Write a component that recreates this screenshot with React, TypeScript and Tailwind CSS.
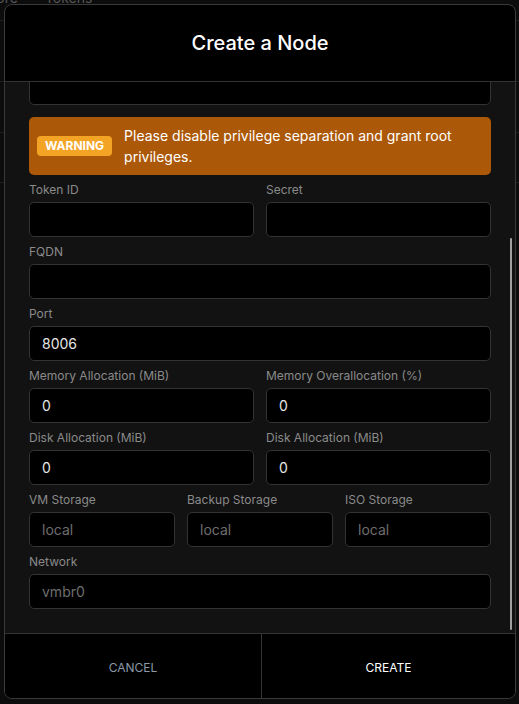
import React, { useLayoutEffect, useRef } from "react";

const font = { fontFamily: "Inter, 'Noto Sans', sans-serif" };

function Label({ children }: { children: React.ReactNode }) {
  return <div className="mb-1 text-xs leading-4 text-[#8a8a8a]">{children}</div>;
}

function Input({ value, placeholder }: { value?: string; placeholder?: string }) {
  return (
    <div className="flex h-[35px] items-center rounded-[5px] border border-[#333] bg-black px-3 text-sm">
      {value ? (
        <span className="text-[#e6e6e6]">{value}</span>
      ) : placeholder ? (
        <span className="text-[#6e6e6e]">{placeholder}</span>
      ) : null}
    </div>
  );
}

function Field({ label, value, placeholder }: { label: string; value?: string; placeholder?: string }) {
  return (
    <div className="min-w-0">
      <Label>{label}</Label>
      <Input value={value} placeholder={placeholder} />
    </div>
  );
}

export default function App() {
  const ref = useRef<HTMLDivElement>(null);
  useLayoutEffect(() => {
    if (ref.current) ref.current.scrollTop = 100000;
  }, []);

  return (
    <div className="relative h-[704px] w-full overflow-hidden bg-[#0c0c0c]" style={font}>
      {/* background page, dimmed */}
      <div className="absolute left-[-46px] top-[-12px] flex gap-[27px] text-sm text-[#555]">
        <span>Datastore</span>
        <span>Tokens</span>
      </div>
      <div className="absolute left-0 right-0 top-[20px] h-px bg-[#1f1f1f]" />
      <div className="absolute left-0 right-0 top-[81px] h-px bg-[#1f1f1f]" />
      <div className="absolute left-0 right-0 top-[132px] h-px bg-[#1f1f1f]" />
      <div className="absolute left-0 right-0 top-[182px] h-px bg-[#1f1f1f]" />

      {/* modal */}
      <div className="absolute left-[4px] top-[4px] flex h-[695px] w-[512px] flex-col overflow-hidden rounded-[8px] border border-[#3a3a3a] bg-black">
        <div className="flex h-[77px] shrink-0 items-center justify-center border-b border-[#333] pb-px text-[20px] font-medium text-white">
          Create a Node
        </div>

        <div className="relative min-h-0 flex-1 bg-[#121212]">
          <div
            ref={ref}
            className="h-full overflow-y-auto px-6 pb-6 pt-6 [scrollbar-width:none] [&::-webkit-scrollbar]:hidden"
          >
            <div className="flex flex-col gap-[7px]">
              <Field label="Name" />
              <Field label="Host" />
              <Field label="Username" />

              <div className="mt-[5px] flex items-center gap-3 rounded-[5px] bg-[#ab5808] py-2 pl-2 pr-2">
                <span className="shrink-0 rounded-[4px] bg-[#f4a425] px-2 text-xs font-bold leading-5 text-white">
                  WARNING
                </span>
                <span className="text-sm leading-[21px] text-white">
                  Please disable privilege separation and grant root privileges.
                </span>
              </div>

              <div className="grid grid-cols-2 gap-3">
                <Field label="Token ID" />
                <Field label="Secret" />
              </div>
              <Field label="FQDN" />
              <Field label="Port" value="8006" />
              <div className="grid grid-cols-2 gap-3">
                <Field label="Memory Allocation (MiB)" value="0" />
                <Field label="Memory Overallocation (%)" value="0" />
              </div>
              <div className="grid grid-cols-2 gap-3">
                <Field label="Disk Allocation (MiB)" value="0" />
                <Field label="Disk Allocation (MiB)" value="0" />
              </div>
              <div className="grid grid-cols-3 gap-3">
                <Field label="VM Storage" placeholder="local" />
                <Field label="Backup Storage" placeholder="local" />
                <Field label="ISO Storage" placeholder="local" />
              </div>
              <Field label="Network" placeholder="vmbr0" />
            </div>
          </div>
          {/* overlay scrollbar thumb */}
          <div className="absolute right-[3px] top-[156px] h-[392px] w-[2px] rounded-full bg-[#a0a0a0]" />
        </div>

        <div className="grid h-[65px] shrink-0 grid-cols-[257px_1fr] border-t border-[#333] bg-black">
          <button className="flex items-center justify-center border-r border-[#333] pt-1 text-xs uppercase text-[#8b98a9]">
            Cancel
          </button>
          <button className="flex items-center justify-center pt-1 text-xs uppercase text-white">
            Create
          </button>
        </div>
      </div>
    </div>
  );
}
